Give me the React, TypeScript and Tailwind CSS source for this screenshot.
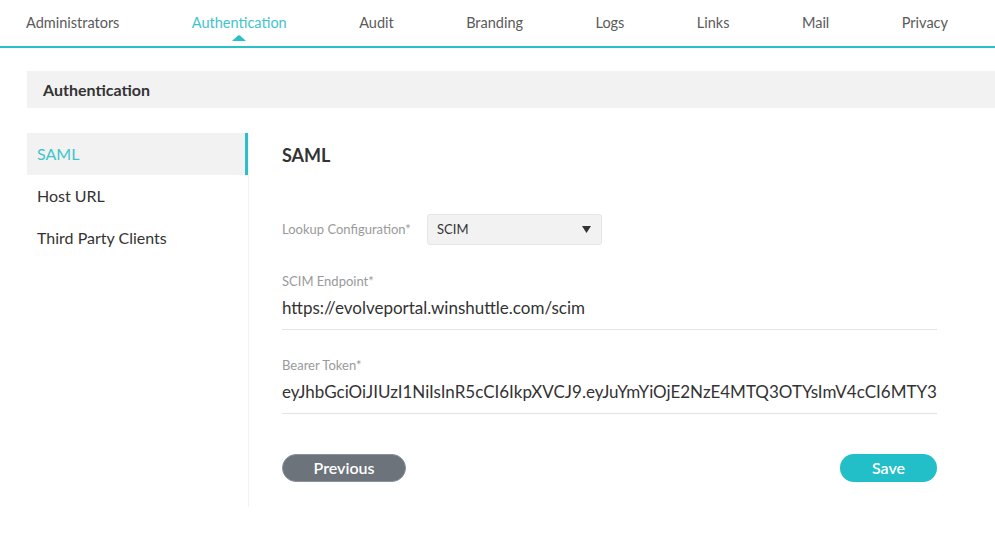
import React from "react";

const tabs = ["Administrators", "Authentication", "Audit", "Branding", "Logs", "Links", "Mail", "Privacy"];

export default function App() {
  return (
    <div className="w-[995px] h-[552px] bg-white overflow-hidden" style={{ fontFamily: "Lato, 'Open Sans', sans-serif" }}>
      {/* Tabs */}
      <div className="relative h-[48px] border-b-2 border-[#2bbfc9]">
        <div className="flex justify-between pl-[26px] pr-[47px] pt-[13px] text-[14.5px] leading-[20px] text-[#5a5a5a]">
          {tabs.map((t) => (
            <div key={t} className={t === "Authentication" ? "relative text-[#3fc4cc]" : ""}>
              {t}
              {t === "Authentication" && (
                <svg className="absolute left-1/2 -translate-x-1/2 top-[22px]" width="16" height="6" viewBox="0 0 16 6">
                  <path d="M1 6 L7 0.6 Q8 0 9 0.6 L15 6 Z" fill="#2bbfc9" />
                </svg>
              )}
            </div>
          ))}
        </div>
      </div>

      {/* Section header */}
      <div className="ml-[27px] mt-[23px] h-[37px] bg-[#f2f2f2] flex items-center pl-[16px]">
        <span className="text-[16px] font-bold text-[#333]">Authentication</span>
      </div>

      <div className="flex ml-[27px] mt-[25px]">
        {/* Sidebar */}
        <div className="w-[222px] h-[374px] border-r border-[#f3f3f3]">
          <div className="h-[42px] bg-[#f2f2f2] border-r-[3px] border-[#2bbfc9] flex items-center pl-[10px] text-[16px] text-[#3fc4cc]">SAML</div>
          <div className="h-[42px] flex items-center pl-[10px] text-[16px] text-[#333]">Host URL</div>
          <div className="h-[42px] flex items-center pl-[10px] text-[16px] text-[#333]">Third Party Clients</div>
        </div>

        {/* Content */}
        <div className="pl-[33px] w-[689px]">
          <div className="mt-[11px] text-[18px] font-bold text-[#333] leading-[22px]">SAML</div>

          <div className="mt-[48px] flex items-center">
            <div className="w-[145px] text-[13px] text-[#9a9a9a]">Lookup Configuration*</div>
            <div className="w-[175px] h-[31px] bg-[#f2f2f2] border border-[#e6e6e6] rounded-[3px] flex items-center justify-between pl-[9px] pr-[10px]">
              <span className="text-[13px] text-[#333]">SCIM</span>
              <svg width="9" height="7" viewBox="0 0 9 7"><path d="M0 0 H9 L4.5 7 Z" fill="#333" /></svg>
            </div>
          </div>

          <div className="mt-[28px] text-[13px] text-[#9a9a9a] leading-[16px]">SCIM Endpoint*</div>
          <input
            readOnly
            value="https://evolveportal.winshuttle.com/scim"
            className="block mt-[8px] pb-[10px] border-b border-[#e3e3e3] w-[655px] text-[17px] text-[#333] leading-[22px] outline-none bg-transparent p-0"
            style={{ fontFamily: "Lato, 'Open Sans', sans-serif" }}
          />

          <div className="mt-[27px] text-[13px] text-[#9a9a9a] leading-[16px]">Bearer Token*</div>
          <input
            readOnly
            value="eyJhbGciOiJIUzI1NiIsInR5cCI6IkpXVCJ9.eyJuYmYiOjE2NzE4MTQ3OTYsImV4cCI6MTY3MTkwMTE5NiwiaWF0IjoxNjcxODE0Nzk2fQ"
            className="block mt-[8px] pb-[10px] border-b border-[#e3e3e3] w-[655px] text-[17px] text-[#333] leading-[22px] outline-none bg-transparent p-0"
            style={{ fontFamily: "Lato, 'Open Sans', sans-serif" }}
          />

          <div className="mt-[40px] w-[655px] flex justify-between">
            <button className="w-[124px] h-[28px] rounded-full bg-[#6c737a] text-white text-[16px] font-semibold border border-[#8a9096]">Previous</button>
            <button className="w-[97px] h-[28px] rounded-full bg-[#22bfc9] text-white text-[16px] font-semibold">Save</button>
          </div>
        </div>
      </div>
    </div>
  );
}
